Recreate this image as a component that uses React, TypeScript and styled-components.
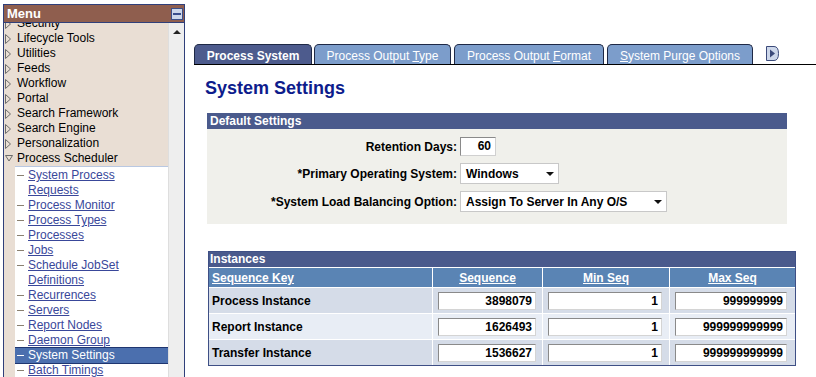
import React from 'react';
import styled, { createGlobalStyle } from 'styled-components';

const GlobalStyle = createGlobalStyle`
  html, body {
    margin: 0;
    padding: 0;
    background: #fff;
    overflow: hidden;
  }
  body {
    font-family: "Liberation Sans", Arial, sans-serif;
    font-size: 12px;
    color: #000;
  }
`;

const Page = styled.div`
  display: flex;
  align-items: flex-start;
  width: 816px;
  height: 377px;
  overflow: hidden;
`;

/* ---------- left menu ---------- */

const MenuPanel = styled.div`
  margin: 4px 0 0 3px;
  width: 180px;
  height: 400px;
  border: 1px solid #2f3f7a;
  border-bottom: none;
  display: flex;
  flex-direction: column;
  flex-shrink: 0;
`;

const MenuHeader = styled.div`
  height: 17px;
  background: #8f5e4e;
  border-bottom: 1px solid #2f3f7a;
  display: flex;
  align-items: center;
  justify-content: space-between;
  padding: 0 1px 0 3px;
`;

const MenuTitle = styled.span`
  color: #fff;
  font-weight: bold;
  font-size: 13px;
`;

const Collapse = styled.span`
  width: 10px;
  height: 10px;
  border: 1px solid #3c4f88;
  background: #cdd7ea;
  display: flex;
  align-items: center;
  justify-content: center;
  &::before {
    content: '';
    width: 8px;
    height: 2px;
    background: #3a4e8c;
  }
`;

const MenuBody = styled.div`
  flex: 1;
  display: flex;
  min-height: 0;
`;

const MenuList = styled.div`
  flex: 1;
  background: #e9ded4;
  overflow: hidden;
`;

/* list is scrolled a few pixels: the first entry sits half under the header */
const MenuScroll = styled.div`
  margin-top: -7px;
`;

const MenuItem = styled.div`
  height: 15px;
  line-height: 15px;
  display: flex;
  align-items: center;
  white-space: nowrap;
`;

const Caret = styled.svg`
  flex: 0 0 auto;
  margin: 0 5px 0 1px;
`;

const Scrollbar = styled.div`
  width: 15px;
  background: #eeeeee;
  border-left: 1px solid #dedede;
  display: flex;
  justify-content: center;
  padding-top: 7px;
  &::before {
    content: '';
    width: 0;
    height: 0;
    border-left: 4px solid transparent;
    border-right: 4px solid transparent;
    border-bottom: 4px solid #222;
  }
`;

const SubMenu = styled.div`
  margin-left: 11px;
  padding-top: 1px;
  background: #fff;
  border-top: 1px solid #b9c8e2;
`;

const SubItem = styled.div<{ $active?: boolean }>`
  display: flex;
  align-items: flex-start;
  line-height: 15px;
  padding-right: 4px;
  background: ${p => (p.$active ? '#4b6fae' : 'transparent')};
  box-shadow: ${p => (p.$active ? '0 1px 0 #1f3670, 0 -1px 0 #1f3670' : 'none')};
  color: ${p => (p.$active ? '#fff' : '#39479a')};
`;

const Dash = styled.span<{ $active?: boolean }>`
  flex: 0 0 7px;
  height: 1px;
  margin: 7px 4px 0 2px;
  background: ${p => (p.$active ? '#fff' : '#8a8070')};
`;

const SubLink = styled.span<{ $active?: boolean }>`
  text-decoration: ${p => (p.$active ? 'none' : 'underline')};
`;

/* ---------- main content ---------- */

const Main = styled.div`
  flex: 1;
  margin-left: 9px;
  padding-top: 43px;
`;

const TabBar = styled.div`
  display: flex;
  align-items: flex-end;
  gap: 3px;
  border-bottom: 1px solid #000;
  height: 21px;
`;

const Tab = styled.div<{ $active?: boolean; $w: number }>`
  width: ${p => p.$w}px;
  box-sizing: border-box;
  height: 20px;
  line-height: 22px;
  text-align: center;
  border: 1px solid #1e2845;
  border-bottom: none;
  border-radius: 5px 5px 0 0;
  background: ${p => (p.$active ? '#4d5b8d' : '#7c9dcb')};
  color: #fff;
  font-weight: ${p => (p.$active ? 'bold' : 'normal')};
  margin-right: ${p => (p.$active ? '-1px' : '0')};
  white-space: nowrap;
`;

const NextTab = styled.svg`
  align-self: flex-start;
  margin: 3px 0 0 10px;
`;

const Content = styled.div`
  padding-left: 11px;
`;

const PageTitle = styled.h1`
  margin: 12px 0 0;
  font-size: 18px;
  line-height: 22px;
  font-weight: bold;
  color: #0d1c8c;
`;

const Section = styled.div`
  margin: 14px 0 0 2px;
  width: 580px;
`;

const SectionHead = styled.div`
  height: 16px;
  line-height: 16px;
  padding-left: 3px;
  background: #4a5a8c;
  color: #fff;
  font-weight: bold;
`;

const FormGrid = styled.div`
  background: #f0f0eb;
  display: grid;
  grid-template-columns: 250px auto;
  column-gap: 3px;
  row-gap: 7px;
  align-items: center;
  padding: 8px 0 12px;
`;

const Label = styled.span`
  text-align: right;
  font-weight: bold;
`;

const Field = styled.div<{ $w: number }>`
  width: ${p => p.$w}px;
  box-sizing: border-box;
  height: 19px;
  line-height: 17px;
  background: #fff;
  border: 1px solid #d0d0d0;
  border-top-color: #8a8a8a;
  border-left-color: #8a8a8a;
  text-align: right;
  padding-right: 4px;
  font-weight: bold;
`;

const Select = styled.div<{ $w: number }>`
  width: ${p => p.$w}px;
  box-sizing: border-box;
  height: 21px;
  background: #fff;
  border: 1px solid #c8c8c8;
  display: flex;
  align-items: center;
  justify-content: space-between;
  padding: 0 4px 0 5px;
  font-weight: bold;
  &::after {
    content: '';
    width: 0;
    height: 0;
    border-left: 4px solid transparent;
    border-right: 4px solid transparent;
    border-top: 4px solid #111;
  }
`;

const Grid = styled.div`
  margin: 27px 0 0 3px;
  width: 586px;
  display: grid;
  grid-template-columns: 223px 109px 126px 125px;
  gap: 1px;
  background: #fff;
  border: 1px solid #3e4f85;
`;

const GridTitle = styled.div`
  grid-column: 1 / -1;
  height: 15px;
  line-height: 15px;
  padding-left: 1px;
  background: #4a5a8c;
  color: #fff;
  font-weight: bold;
`;

const ColHead = styled.div<{ $left?: boolean }>`
  height: 19px;
  line-height: 20px;
  background: #5a84b4;
  color: #fff;
  font-weight: bold;
  text-decoration: underline;
  text-align: ${p => (p.$left ? 'left' : 'center')};
  padding-left: ${p => (p.$left ? '3px' : '0')};
`;

const Cell = styled.div<{ $alt?: boolean }>`
  height: 25px;
  display: flex;
  align-items: center;
  padding-left: 5px;
  background: ${p => (p.$alt ? '#e8edf5' : '#d5dce8')};
`;

const RowLabel = styled(Cell)`
  padding-left: 3px;
  font-weight: bold;
`;

const NumBox = styled.div<{ $w: number }>`
  width: ${p => p.$w}px;
  box-sizing: border-box;
  height: 18px;
  line-height: 16px;
  background: #fff;
  border: 1px solid #d4d4d4;
  border-top-color: #8a8a8a;
  border-left-color: #8a8a8a;
  text-align: right;
  padding-right: 3px;
  font-weight: bold;
`;

const topItems = [
  'Security',
  'Lifecycle Tools',
  'Utilities',
  'Feeds',
  'Workflow',
  'Portal',
  'Search Framework',
  'Search Engine',
  'Personalization',
];

const subItems = [
  'System Process Requests',
  'Process Monitor',
  'Process Types',
  'Processes',
  'Jobs',
  'Schedule JobSet Definitions',
  'Recurrences',
  'Servers',
  'Report Nodes',
  'Daemon Group',
  'System Settings',
  'Batch Timings',
];

const instances = [
  { key: 'Process Instance', seq: '3898079', min: '1', max: '999999999' },
  { key: 'Report Instance', seq: '1626493', min: '1', max: '999999999999' },
  { key: 'Transfer Instance', seq: '1536627', min: '1', max: '999999999999' },
];

const Closed = () => (
  <Caret width="7" height="10" viewBox="0 0 7 10">
    <polygon points="0.5,0.5 5.5,5 0.5,9.5" fill="none" stroke="#6b6b6b" />
  </Caret>
);

const Open = () => (
  <Caret width="8" height="7" viewBox="0 0 8 7" style={{ marginRight: 4 }}>
    <polygon points="0.5,0.5 7.5,0.5 4,6" fill="none" stroke="#6b6b6b" />
  </Caret>
);

const App = () => {
  return (
    <Page>
      <GlobalStyle />
      <MenuPanel>
        <MenuHeader>
          <MenuTitle>Menu</MenuTitle>
          <Collapse />
        </MenuHeader>
        <MenuBody>
          <MenuList>
            <MenuScroll>
              {topItems.map(t => (
                <MenuItem key={t}>
                  <Closed />
                  {t}
                </MenuItem>
              ))}
              <MenuItem>
                <Open />
                Process Scheduler
              </MenuItem>
              <SubMenu>
                {subItems.map(s => {
                  const active = s === 'System Settings';
                  return (
                    <SubItem key={s} $active={active}>
                      <Dash $active={active} />
                      <SubLink $active={active}>{s}</SubLink>
                    </SubItem>
                  );
                })}
              </SubMenu>
            </MenuScroll>
          </MenuList>
          <Scrollbar />
        </MenuBody>
      </MenuPanel>

      <Main>
        <TabBar>
          <Tab $active $w={118}>Process System</Tab>
          <Tab $w={137}>Process Output <u>T</u>ype</Tab>
          <Tab $w={150}>Process Output <u>F</u>ormat</Tab>
          <Tab $w={146}><u>S</u>ystem Purge Options</Tab>
          <NextTab width="13" height="15" viewBox="0 0 13 15">
            <path d="M0.5 0.5 H8 Q12.5 0.5 12.5 7.5 Q12.5 14.5 8 14.5 H0.5 Z" fill="#cdd7ea" stroke="#3b4a7a" />
            <polygon points="4,3.5 9,7.5 4,11.5" fill="#3b4a7a" />
          </NextTab>
        </TabBar>

        <Content>
          <PageTitle>System Settings</PageTitle>

          <Section>
            <SectionHead>Default Settings</SectionHead>
            <FormGrid>
              <Label>Retention Days:</Label>
              <Field $w={36}>60</Field>
              <Label>*Primary Operating System:</Label>
              <Select $w={99}>Windows</Select>
              <Label>*System Load Balancing Option:</Label>
              <Select $w={207}>Assign To Server In Any O/S</Select>
            </FormGrid>
          </Section>

          <Grid>
            <GridTitle>Instances</GridTitle>
            <ColHead $left>Sequence Key</ColHead>
            <ColHead>Sequence</ColHead>
            <ColHead>Min Seq</ColHead>
            <ColHead>Max Seq</ColHead>
            {instances.map((r, i) => (
              <React.Fragment key={r.key}>
                <RowLabel $alt={i === 1}>{r.key}</RowLabel>
                <Cell $alt={i === 1}><NumBox $w={98}>{r.seq}</NumBox></Cell>
                <Cell $alt={i === 1}><NumBox $w={114}>{r.min}</NumBox></Cell>
                <Cell $alt={i === 1}><NumBox $w={112}>{r.max}</NumBox></Cell>
              </React.Fragment>
            ))}
          </Grid>
        </Content>
      </Main>
    </Page>
  );
};

export default App;
